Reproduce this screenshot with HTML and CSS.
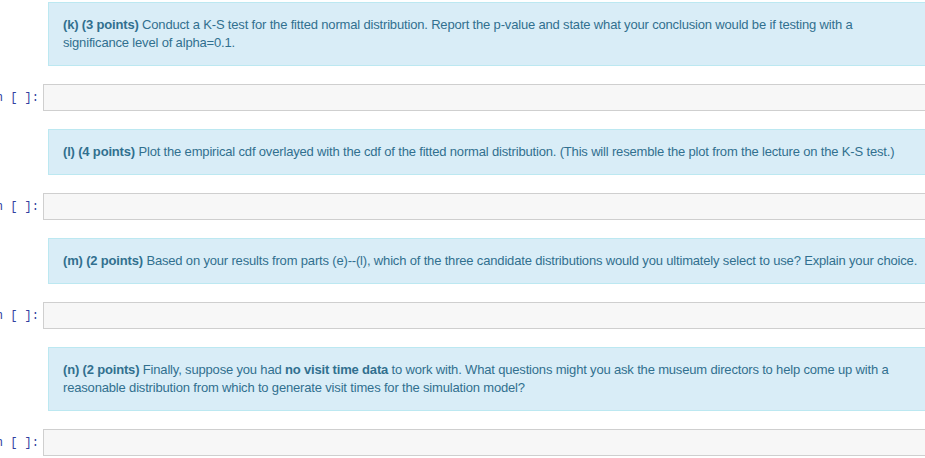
FILE: index.html
```html
<!DOCTYPE html>
<html>
<head>
<meta charset="utf-8">
<link rel="stylesheet" href="styles.css">
</head>
<body>
<div class="notebook">
  <div class="cell md-cell">
    <div class="md-prompt"></div>
    <div class="alert">
      <b>(k) (3 points)</b> Conduct a K-S test for the fitted normal distribution. Report the p-value and state what your conclusion would be if testing with a significance level of alpha=0.1.
    </div>
  </div>
  <div class="cell code-cell">
    <div class="prompt"><span>In&nbsp;[&nbsp;]:</span></div>
    <div class="input"></div>
  </div>

  <div class="cell md-cell">
    <div class="md-prompt"></div>
    <div class="alert">
      <b>(l) (4 points)</b> Plot the empirical cdf overlayed with the cdf of the fitted normal distribution. (This will resemble the plot from the lecture on the K-S test.)
    </div>
  </div>
  <div class="cell code-cell">
    <div class="prompt"><span>In&nbsp;[&nbsp;]:</span></div>
    <div class="input"></div>
  </div>

  <div class="cell md-cell">
    <div class="md-prompt"></div>
    <div class="alert">
      <b>(m) (2 points)</b> Based on your results from parts (e)--(l), which of the three candidate distributions would you ultimately select to use? Explain your choice.
    </div>
  </div>
  <div class="cell code-cell">
    <div class="prompt"><span>In&nbsp;[&nbsp;]:</span></div>
    <div class="input"></div>
  </div>

  <div class="cell md-cell">
    <div class="md-prompt"></div>
    <div class="alert">
      <b>(n) (2 points)</b> Finally, suppose you had <b>no visit time data</b> to work with. What questions might you ask the museum directors to help come up with a reasonable distribution from which to generate visit times for the simulation model?
    </div>
  </div>
  <div class="cell code-cell">
    <div class="prompt"><span>In&nbsp;[&nbsp;]:</span></div>
    <div class="input"></div>
  </div>
</div>
</body>
</html>
```

FILE: styles.css
```css
html, body {
  margin: 0;
  padding: 0;
  background: #ffffff;
  overflow: hidden;
}

.notebook {
  width: 1000px;
  padding-top: 2px;
  display: flex;
  flex-direction: column;
  gap: 18px;
  font-family: "Liberation Sans", Arial, sans-serif;
  font-size: 13px;
}

.cell {
  display: flex;
  align-items: stretch;
}

.md-prompt {
  flex: 0 0 48px;
}

.alert {
  flex: none;
  width: 855px;
  background: #d9edf7;
  border: 1px solid #bce8f1;
  color: #31708f;
  padding: 13px 14px;
  line-height: 18px;
  letter-spacing: -0.17px;
}

.alert b {
  font-weight: bold;
}

.prompt {
  flex: 0 0 43px;
  min-width: 0;
  box-sizing: border-box;
  padding-right: 4px;
  display: flex;
  justify-content: flex-end;
  align-items: center;
  white-space: nowrap;
  font-family: "Liberation Mono", "Courier New", monospace;
  font-size: 12px;
  color: #303f9f;
}

.prompt span {
  flex: none;
}

.input {
  flex: 1;
  height: 25px;
  background: #f7f7f7;
  border: 1px solid #cfcfcf;
}
```
